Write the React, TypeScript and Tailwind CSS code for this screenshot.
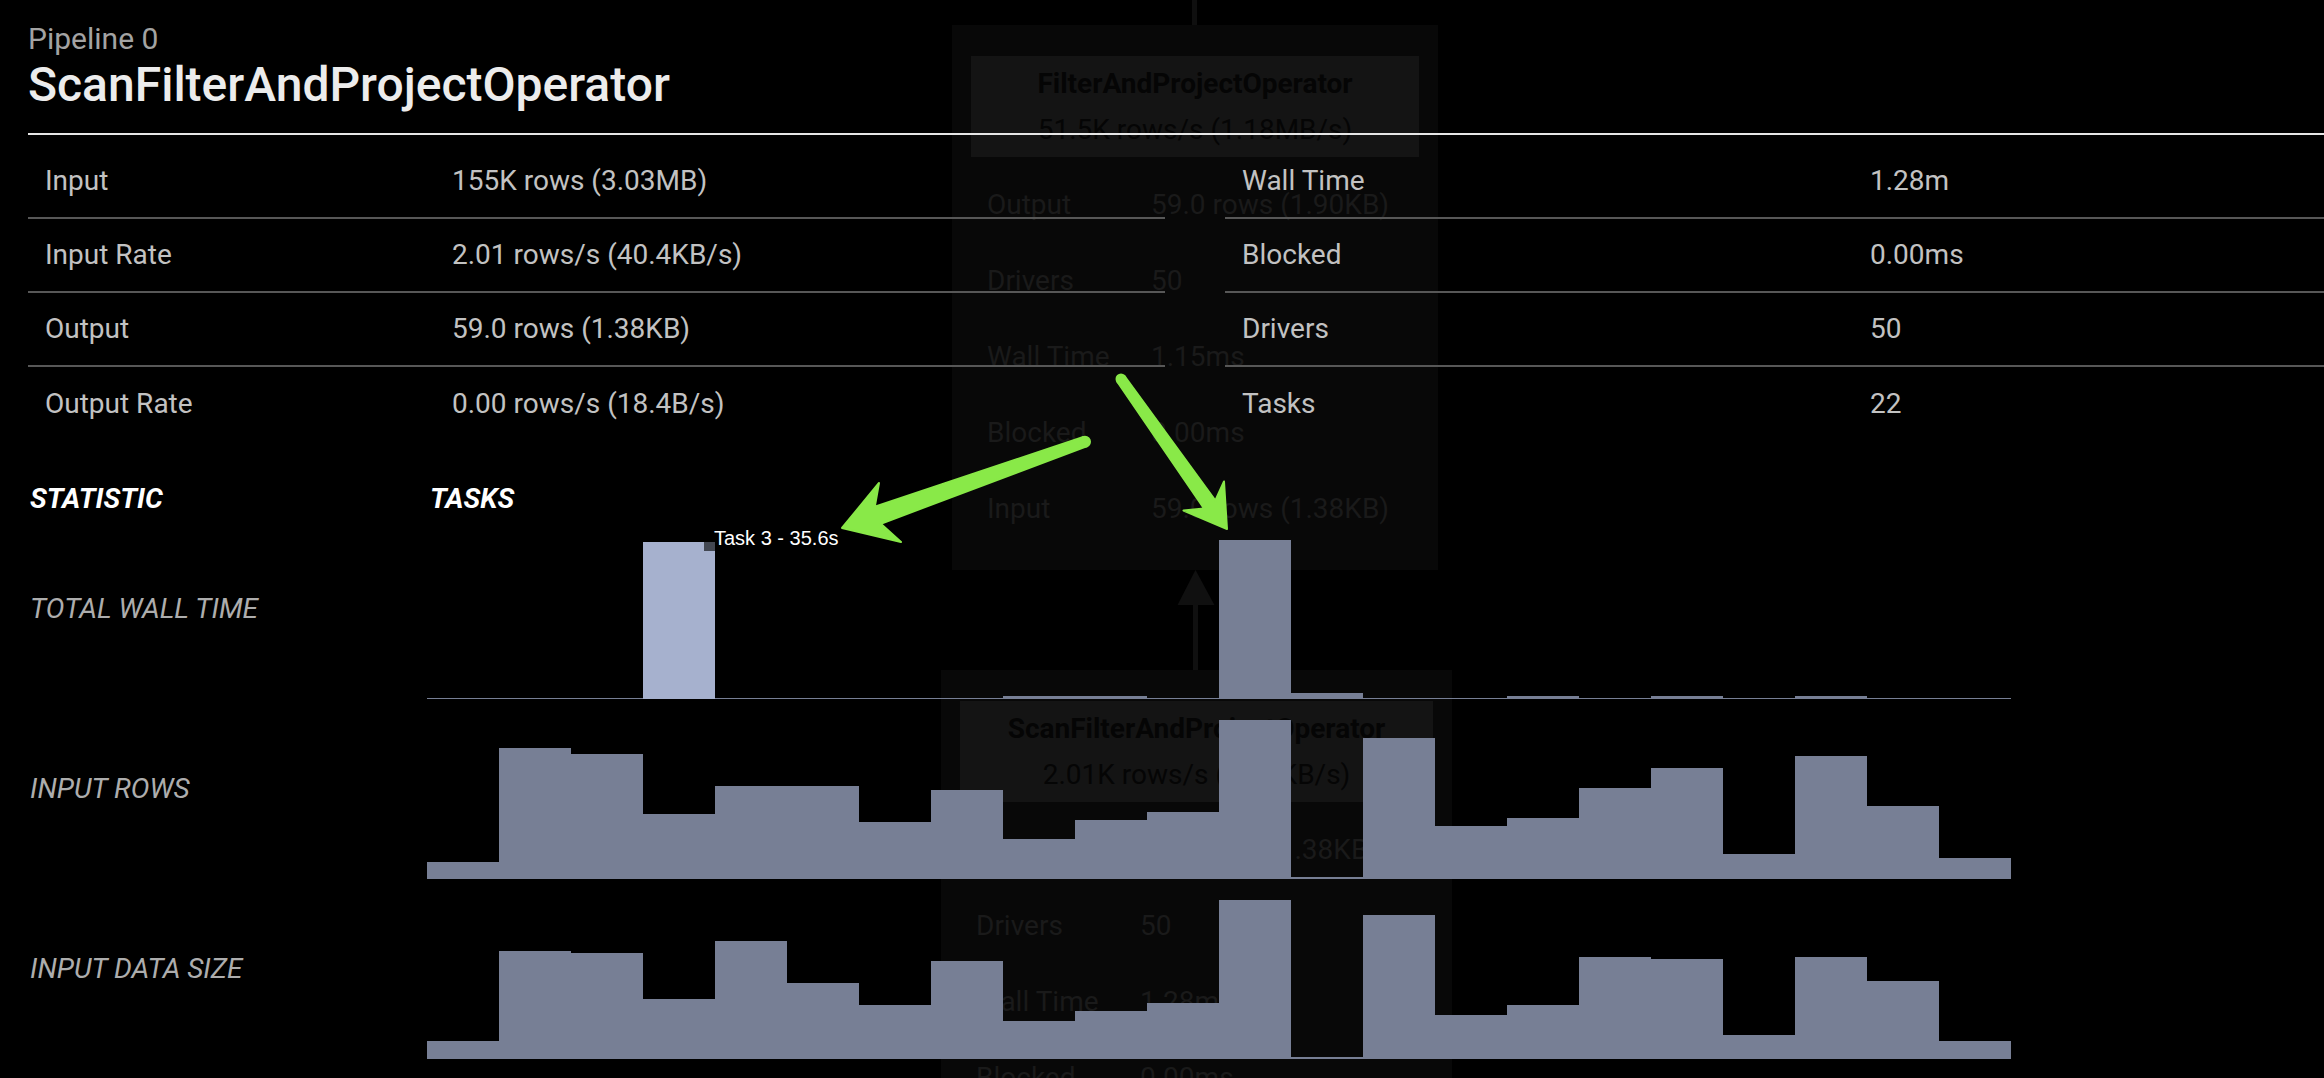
import React from 'react';

const LEFT_STATS = [
  ['Input', '155K rows (3.03MB)'],
  ['Input Rate', '2.01 rows/s (40.4KB/s)'],
  ['Output', '59.0 rows (1.38KB)'],
  ['Output Rate', '0.00 rows/s (18.4B/s)'],
];

const RIGHT_STATS = [
  ['Wall Time', '1.28m'],
  ['Blocked', '0.00ms'],
  ['Drivers', '50'],
  ['Tasks', '22'],
];

// bar heights in px, one per task (22 tasks)
const CHARTS = [
  { name: 'TOTAL WALL TIME', values: [1, 1, 1, 157, 1, 1, 1, 1, 3, 3, 1, 159, 6, 1, 1, 3, 1, 3, 1, 3, 1, 1], highlight: 3 },
  { name: 'INPUT ROWS', values: [17, 131, 125, 65, 93, 93, 57, 89, 40, 59, 67, 159, 2, 141, 53, 61, 91, 111, 25, 123, 73, 21], highlight: -1 },
  { name: 'INPUT DATA SIZE', values: [18, 108, 106, 60, 118, 76, 54, 98, 38, 48, 56, 159, 2, 144, 44, 54, 102, 100, 24, 102, 78, 18], highlight: -1 },
];

function GhostNode({ left, top, width, height, title, rate, rows }: {
  left: number; top: number; width: number; height: number; title: string; rate: string; rows: string[][];
}) {
  return (
    <div className="absolute bg-[#080808] px-[19px] pt-[31px]" style={{ left, top, width, height }}>
      <div className="flex h-[101px] flex-col items-center pt-[5px] bg-[#141414] text-[28px] leading-[46px] text-[#050505]">
        <div className="font-bold">{title}</div>
        <div>{rate}</div>
      </div>
      <div className="mt-[10px] text-[28px] text-[#1a1a1a]">
        {rows.map(([k, v]) => (
          <div key={k} className="flex h-[76px] items-center pl-[16px]">
            <span className="w-[164px] shrink-0">{k}</span>
            <span>{v}</span>
          </div>
        ))}
      </div>
    </div>
  );
}

function StatTable({ rows, width, labelWidth }: { rows: string[][]; width: string; labelWidth: string }) {
  return (
    <div className={`${width} shrink-0`}>
      {rows.map(([k, v], i) => (
        <div
          key={k}
          className={
            'flex h-[74px] items-center text-[28px] text-[#c2c2c2] ' +
            (i < rows.length - 1 ? 'border-b-2 border-[#575757]' : '')
          }
        >
          <div className={`${labelWidth} shrink-0 pl-[17px]`}>{k}</div>
          <div>{v}</div>
        </div>
      ))}
    </div>
  );
}

export default function App() {
  return (
    <div className="relative h-[1078px] w-[2324px] overflow-hidden bg-black font-['Roboto',sans-serif]">
      {/* faded query graph behind the modal */}
      <div className="absolute inset-0">
        <div className="absolute left-[1192px] top-0 h-[25px] w-[5px] bg-[#0f0f0f]" />
        <GhostNode
          left={952}
          top={25}
          width={486}
          height={545}
          title="FilterAndProjectOperator"
          rate="51.5K rows/s (1.18MB/s)"
          rows={[
            ['Output', '59.0 rows (1.90KB)'],
            ['Drivers', '50'],
            ['Wall Time', '1.15ms'],
            ['Blocked', '0.00ms'],
            ['Input', '59.0 rows (1.38KB)'],
          ]}
        />
        <svg className="absolute left-[1170px] top-[565px]" width="50" height="110" viewBox="0 0 50 110">
          <polygon points="25.5,5 7.6,40 44.4,40" fill="#101010" />
          <rect x="23" y="40" width="5" height="65" fill="#101010" />
        </svg>
        <GhostNode
          left={941}
          top={670}
          width={511}
          height={460}
          title="ScanFilterAndProjectOperator"
          rate="2.01K rows/s (1.38KB/s)"
          rows={[
            ['Output', '59.0 rows (1.38KB)'],
            ['Drivers', '50'],
            ['Wall Time', '1.28m'],
            ['Blocked', '0.00ms'],
          ]}
        />
      </div>

      <div className="relative pl-[28px] pt-[21px]">
        <div className="text-[30px] leading-[36px] text-[#a3a3a3]">Pipeline 0</div>
        <div className="text-[48px] font-medium leading-[56px] text-[#ececec]">ScanFilterAndProjectOperator</div>
        <div className="mt-[20px] h-[2px] bg-[#e6e6e6]" />

        <div className="mt-[10px] flex gap-[60px]">
          <StatTable rows={LEFT_STATS} width="w-[1137px]" labelWidth="w-[424px]" />
          <StatTable rows={RIGHT_STATS} width="w-[1730px]" labelWidth="w-[645px]" />
        </div>

        <div className="mt-[38px] grid grid-cols-[399px_1584px]">
          <div className="flex h-[40px] items-center pl-[2px] text-[28px] font-bold italic text-white">STATISTIC</div>
          <div className="flex h-[40px] items-center pl-[3px] text-[28px] font-bold italic text-white">TASKS</div>

          {CHARTS.map((chart) => (
            <React.Fragment key={chart.name}>
              <div className="flex h-[180px] items-center pl-[2px] text-[28px] italic text-[#adadad]">{chart.name}</div>
              <div className="relative flex h-[180px] items-end">
                {chart.values.map((v, i) => (
                  <div
                    key={i}
                    className={'w-[72px] shrink-0 ' + (i === chart.highlight ? 'bg-[#a6b1ce]' : 'bg-[#777f95]')}
                    style={{ height: v }}
                  />
                ))}
                {chart.highlight >= 0 && (
                  <div className="absolute left-[277px] top-[5px] flex h-[27px] items-center bg-black/60 pl-[10px] pr-[8px] font-['Liberation_Sans',Arial,sans-serif] text-[20px] text-white">
                    Task 3 - 35.6s
                  </div>
                )}
              </div>
            </React.Fragment>
          ))}
        </div>
      </div>

      {/* annotation arrows */}
      <svg className="pointer-events-none absolute inset-0" width="2324" height="1078" viewBox="0 0 2324 1078">
        <g fill="#89e948" stroke="#89e948" strokeWidth="2" strokeLinejoin="round">
          <polygon points="842,528 879,483 874.8,506.7 1083.3,437 1086.7,446.4 880.8,523.7 901,542" />
          <circle cx="1085" cy="441.7" r="5" />
          <polygon points="1227,529 1183.5,510.5 1204,508.5 1117.3,381.6 1124.7,376.4 1215.4,500.5 1224,481.5" />
          <circle cx="1121" cy="379" r="4.5" />
        </g>
      </svg>
    </div>
  );
}
